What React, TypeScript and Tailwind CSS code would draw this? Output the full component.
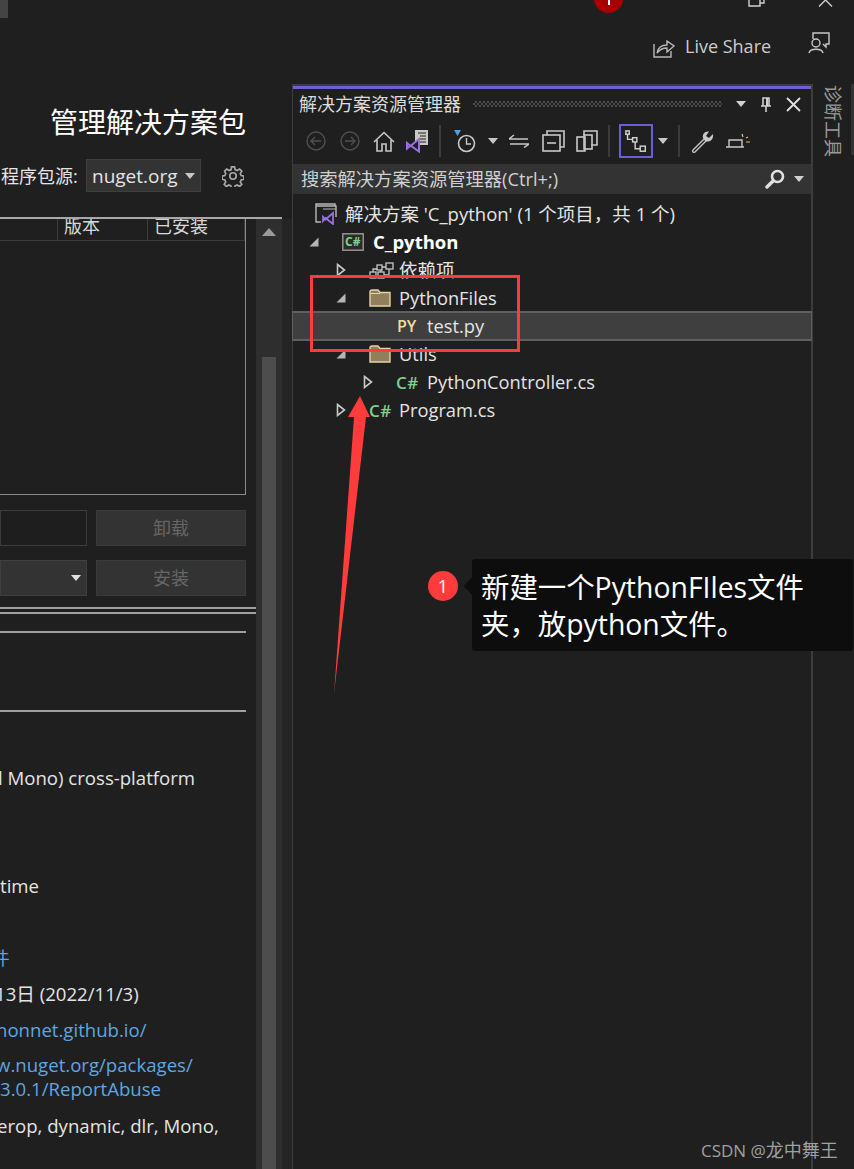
import React from "react";

const FONT = "font-['Open_Sans','Noto_Sans_CJK_SC',sans-serif]";

function Arrow({ open }: { open?: boolean }) {
  if (open) {
    return (
      <svg width="10" height="10" viewBox="0 0 10 10">
        <path d="M0.5 9.5 L9.5 9.5 L9.5 0.5 Z" fill="#b4b4b4" />
      </svg>
    );
  }
  return (
    <svg width="10" height="14" viewBox="0 0 10 14">
      <path d="M1.5 1.5 L8.5 7 L1.5 12.5 Z" fill="none" stroke="#c8c8c8" strokeWidth="1.6" />
    </svg>
  );
}

function Caret({ color = "#c8c8c8" }: { color?: string }) {
  return (
    <svg width="10" height="6" viewBox="0 0 10 6">
      <path d="M0 0 H10 L5 6 Z" fill={color} />
    </svg>
  );
}

function FolderIcon() {
  return (
    <svg width="22" height="18" viewBox="0 0 22 18">
      <path d="M1 3 Q1 1 3 1 H9 L11 3.5 H21 V17 H1 Z" fill="#8f7f5d" stroke="#e6d3a3" strokeWidth="1.4" />
      <path d="M1 4.5 H11" stroke="#e6d3a3" strokeWidth="1" />
    </svg>
  );
}

function CSharp() {
  return <span className="text-[17px] leading-none font-semibold tracking-[0.5px] text-[#7fd08c]">C#</span>;
}

function CsProject() {
  return (
    <svg width="22" height="18" viewBox="0 0 22 18">
      <rect x="0.8" y="0.8" width="20.4" height="16.4" fill="#2b2b2b" stroke="#9a9a9a" strokeWidth="1.4" />
      <text x="3" y="13" fontSize="12" fontWeight="700" fill="#7fd08c" fontFamily="'Open Sans',sans-serif">C#</text>
    </svg>
  );
}

function DepsIcon() {
  return (
    <svg width="25" height="17" viewBox="0 0 25 17" fill="none" stroke="#c8c8c8" strokeWidth="1.3">
      <rect x="1" y="10" width="6" height="6" />
      <rect x="9" y="10" width="6" height="6" />
      <rect x="17" y="1" width="7" height="6" />
      <rect x="8" y="3" width="5" height="5" />
      <path d="M4 10 V7 H8 M13 5 H17 M12 10 V8 M20 7 V13 H15" />
    </svg>
  );
}

function SolutionIcon() {
  return (
    <svg width="23" height="22" viewBox="0 0 23 22" fill="none">
      <path d="M1 3 V1 H20 V3 M1 3 H21 V14 M1 3 V19 H6" stroke="#b8b8b8" strokeWidth="1.4" />
      <path d="M8 6 H21" stroke="#b8b8b8" strokeWidth="1" />
      <path d="M8 14 L10.5 16.5 L18 10 L18 21 L10.5 15 L8 18 Z" fill="none" stroke="#9b6fe0" strokeWidth="1.8" />
    </svg>
  );
}

const ROWS = [
  { pad: "pl-[22px]", slot: "w-0", icon: <SolutionIcon />, iconBox: "w-[30px]", label: "解决方案 'C_python' (1 个项目，共 1 个)", text: "text-[18.5px]" },
  { pad: "pl-[16px]", slot: "w-[33px]", arrow: "open", icon: <CsProject />, iconBox: "w-[31px]", label: "C_python", text: "text-[18.5px] font-bold text-white" },
  { pad: "pl-[43px]", slot: "w-[33px]", arrow: "closed", icon: <DepsIcon />, iconBox: "w-[30px]", label: "依赖项", text: "text-[18.5px]" },
  { pad: "pl-[43px]", slot: "w-[33px]", arrow: "open", icon: <FolderIcon />, iconBox: "w-[30px]", label: "PythonFiles", text: "text-[18.3px]" },
  { pad: "pl-[104px]", slot: "w-0", icon: <span className="text-[16px] leading-none font-semibold text-[#f0dca0]">PY</span>, iconBox: "w-[30px]", label: "test.py", text: "text-[18.3px]", selected: true },
  { pad: "pl-[43px]", slot: "w-[33px]", arrow: "open", icon: <FolderIcon />, iconBox: "w-[30px]", label: "Utils", text: "text-[18.3px]" },
  { pad: "pl-[70px]", slot: "w-[33px]", arrow: "closed", icon: <CSharp />, iconBox: "w-[31px]", label: "PythonController.cs", text: "text-[18.3px]" },
  { pad: "pl-[43px]", slot: "w-[33px]", arrow: "closed", icon: <CSharp />, iconBox: "w-[30px]", label: "Program.cs", text: "text-[18.3px]" },
];

function Sep() {
  return <div className="w-[2px] h-[32px] bg-[#3c3c3c]" />;
}

function Toolbar() {
  return (
    <div className="h-[34px] mt-[5px] ml-[13px] flex items-center">
      <svg width="20" height="20" viewBox="0 0 20 20" fill="none" stroke="#4f4f4f" strokeWidth="1.4">
        <circle cx="10" cy="10" r="9" />
        <path d="M15 10 H5 M9 6 L5 10 L9 14" />
      </svg>
      <svg className="ml-[14px]" width="20" height="20" viewBox="0 0 20 20" fill="none" stroke="#4f4f4f" strokeWidth="1.4">
        <circle cx="10" cy="10" r="9" />
        <path d="M5 10 H15 M11 6 L15 10 L11 14" />
      </svg>
      <svg className="ml-[13px]" width="22" height="21" viewBox="0 0 22 21" fill="none" stroke="#c8c8c8" strokeWidth="1.6">
        <path d="M1 11 L11 1.5 L21 11 M4 9 V20 H9 V13 H13 V20 H18 V9" />
      </svg>
      <svg className="ml-[11px]" width="23" height="24" viewBox="0 0 23 24" fill="none">
        <rect x="9" y="1" width="13" height="15" fill="#c8c8c8" />
        <path d="M12 4 H20 M14 7 H20 M14 10 H20 M14 13 H20" stroke="#1f1f1f" strokeWidth="1.2" />
        <path d="M1 14 L4.5 17 L13 10 V22.5 L4.5 16.5 L1 19.5 Z" fill="#1f1f1f" stroke="#9b6fe0" strokeWidth="2" />
      </svg>
      <div className="ml-[10px]"><Sep /></div>
      <svg className="ml-[13px]" width="22" height="24" viewBox="0 0 22 24" fill="none">
        <path d="M0 1 H7 L3.5 7 Z" fill="#4aa3e8" />
        <circle cx="12.5" cy="14.5" r="8" stroke="#c8c8c8" strokeWidth="1.6" />
        <path d="M12.5 9 V15 H17" stroke="#c8c8c8" strokeWidth="1.4" />
      </svg>
      <div className="ml-[12px]"><Caret /></div>
      <svg className="ml-[11px]" width="20" height="14" viewBox="0 0 20 14" fill="none" stroke="#c8c8c8" strokeWidth="1.5">
        <path d="M0 5 H19 M0 5 L5 1 M20 10 H1 M20 10 L15 13.5" />
      </svg>
      <svg className="ml-[13px]" width="23" height="22" viewBox="0 0 23 22" fill="none" stroke="#c8c8c8" strokeWidth="1.6">
        <path d="M5 5 V1 H22 V17 H18" />
        <rect x="1" y="5" width="17" height="16" />
        <path d="M5 13 H14" />
      </svg>
      <svg className="ml-[11px]" width="22" height="22" viewBox="0 0 22 22" fill="none" stroke="#c8c8c8" strokeWidth="1.6">
        <path d="M8 5 V1 H21 V15 H15" />
        <rect x="1" y="7" width="8" height="14" />
        <rect x="8" y="5" width="8" height="14" />
      </svg>
      <div className="ml-[10px]"><Sep /></div>
      <div className="ml-[9px] w-[34px] h-[34px] border-2 border-[#6a5fd8] flex items-center justify-center">
        <svg width="22" height="23" viewBox="0 0 26 27" fill="none" stroke="#d0d0d0" strokeWidth="1.7">
          <rect x="1" y="1" width="4" height="4" />
          <rect x="9" y="9" width="5" height="5" />
          <rect x="18" y="19" width="6" height="6" />
          <path d="M3 5 V11 H9 M12 14 V22 H18" />
        </svg>
      </div>
      <div className="ml-[5px]"><Caret /></div>
      <div className="ml-[10px]"><Sep /></div>
      <svg className="ml-[12px]" width="23" height="23" viewBox="0 0 23 23" fill="none">
        <path d="M2 21 L13 10" stroke="#c8c8c8" strokeWidth="4" strokeLinecap="round" />
        <path d="M2 21 L13 10" stroke="#1f1f1f" strokeWidth="1.5" strokeLinecap="round" />
        <path d="M21 4 L17 8 L14 6 L17 1.5 C13 1 10 4 11 8 L13 11 C17 13 22 10 21 4 Z" fill="#c8c8c8" />
      </svg>
      <svg className="ml-[11px]" width="25" height="16" viewBox="0 0 25 16" fill="none">
        <path d="M0 14 H18 M3 14 V7 H16 V14" stroke="#c8c8c8" strokeWidth="1.4" />
        <path d="M16 1 L17 4 M20 9 H24 M20 5 L22 4" stroke="#e8c468" strokeWidth="1.2" />
      </svg>
    </div>
  );
}

function SolutionExplorer() {
  return (
    <section className="w-[521px] shrink-0 border-l border-r-2 border-t-2 border-[#3c3c3c] h-full">
      <div className="h-[3px] bg-[#6a5fd8]" />
      <div className="h-[30px] flex items-center pl-[6px]">
        <span className="text-[18px] leading-[28px] text-[#dcdcdc]">解决方案资源管理器</span>
        <div className="ml-[12px] w-[249px] h-[6px] bg-[repeating-conic-gradient(#4a4a4a_0_25%,transparent_0_50%)] bg-[length:4px_4px]" />
        <div className="ml-[14px]"><Caret color="#d0d0d0" /></div>
        <svg className="ml-[15px]" width="10" height="15" viewBox="0 0 10 15" fill="none" stroke="#d0d0d0" strokeWidth="1.6">
          <path d="M2 1 H8 V9 H2 Z M0 9 H10 M5 9 V15" />
          <path d="M6 1 V9" strokeWidth="2" />
        </svg>
        <svg className="ml-[15px]" width="15" height="15" viewBox="0 0 15 15" stroke="#e0e0e0" strokeWidth="1.8">
          <path d="M1 1 L14 14 M14 1 L1 14" />
        </svg>
      </div>
      <Toolbar />
      <div className="mt-[6px] h-[30px] bg-[#333333] flex items-center pl-[8px] pr-[7px] text-[18.3px] text-[#d0d0d0]">
        <span>搜索解决方案资源管理器(Ctrl+;)</span>
        <svg className="ml-auto" width="20" height="20" viewBox="0 0 20 20" fill="none" stroke="#e0e0e0">
          <circle cx="12.5" cy="7.5" r="5.5" strokeWidth="2.6" />
          <path d="M8 12 L2 18" strokeWidth="3.4" strokeLinecap="round" />
        </svg>
        <div className="ml-[9px]"><Caret color="#d0d0d0" /></div>
      </div>
      <div className="mt-[6px]">
        {ROWS.map((r) => (
          <div
            key={r.label}
            className={`h-[28px] flex items-center text-[#e4e4e4] ${r.pad} ${r.selected ? "bg-[#3f3f3f] border-y border-[#5f5f5f] outline outline-[#5f5f5f]" : ""}`}
          >
            <div className={`${r.slot} shrink-0 flex items-center`}>
              {r.arrow && <Arrow open={r.arrow === "open"} />}
            </div>
            <div className={`${r.iconBox} shrink-0 flex items-center`}>{r.icon}</div>
            <span className={`whitespace-nowrap ${r.text}`}>{r.label}</span>
          </div>
        ))}
      </div>
    </section>
  );
}

function PackagePane() {
  return (
    <div className="w-[256px] shrink-0 text-[#e4e4e4] overflow-hidden">
      <h1 className="h-[75px] pt-[16px] pl-[50px] text-[28px] leading-[44px] font-normal text-white whitespace-nowrap">管理解决方案包</h1>
      <div className="h-[58px] flex items-start">
        <span className="w-[86px] pl-[1px] text-[18px] leading-[34px] whitespace-nowrap">程序包源:</span>
        <div className="w-[115px] h-[33px] bg-[#333333] border border-[#3f3f3f] flex items-center pl-[5px] pt-[1px] text-[19px]">
          nuget.org
          <div className="ml-auto mr-[5px]"><Caret /></div>
        </div>
        <svg className="ml-[21px] mt-[6px]" width="22" height="22" viewBox="0 0 24 24" fill="none" stroke="#a8a8a8" strokeWidth="1.8">
          <circle cx="12" cy="12" r="3.5" />
          <path d="M10.3 2h3.4l.6 3 2.3 1 2.6-1.7 2.4 2.4-1.7 2.6 1 2.3 3 .6v3.4l-3 .6-1 2.3 1.7 2.6-2.4 2.4-2.6-1.7-2.3 1-.6 3h-3.4l-.6-3-2.3-1-2.6 1.7-2.4-2.4 1.7-2.6-1-2.3-3-.6v-3.4l3-.6 1-2.3L2.8 6.7l2.4-2.4 2.6 1.7 2.3-1z" />
        </svg>
      </div>
      <div className="h-[2px] bg-[#a8a8a8]" />
      <div className="w-[246px] h-[276px] border-r border-b border-[#8a8a8a]">
        <div className="h-[22px] flex border-b border-[#3c3c3c] text-[18px] leading-[14px] overflow-hidden text-[#d8d8d8]">
          <div className="w-[58px] border-r border-[#3c3c3c]" />
          <div className="w-[90px] pl-[6px] border-r border-[#3c3c3c]">版本</div>
          <div className="w-[97px] pl-[6px] border-r border-[#3c3c3c] whitespace-nowrap">已安装</div>
        </div>
      </div>
      <div className="mt-[15px] h-[36px] flex justify-between w-[246px]">
        <div className="w-[87px] border border-[#3c3c3c] bg-[#1e1e1e]" />
        <div className="w-[150px] bg-[#333333] border border-[#3a3a3a] flex items-center justify-center text-[18px] text-[#666666]">卸载</div>
      </div>
      <div className="mt-[14px] h-[36px] flex justify-between w-[246px]">
        <div className="w-[87px] bg-[#333333] border border-[#3f3f3f] flex items-center justify-end pr-[5px]"><Caret color="#e0e0e0" /></div>
        <div className="w-[150px] bg-[#333333] border border-[#3a3a3a] flex items-center justify-center text-[18px] text-[#666666]">安装</div>
      </div>
      <div className="mt-[11px] h-[7px] border-y-2 border-[#a0a0a0]" />
      <div className="mt-[17px] w-[246px] h-[81px] border-y-2 border-[#a0a0a0]" />
      <div className="mt-[53px] h-[26px] -ml-[2px] text-[18.6px] leading-[26px] whitespace-nowrap">l Mono) cross-platform</div>
      <div className="mt-[82px] h-[26px] text-[18.6px] leading-[26px]">time</div>
      <div className="mt-[46px] h-[26px] -ml-[9px] text-[18.6px] leading-[26px] text-[#5ea6e0]">件</div>
      <div className="mt-[10px] h-[26px] -ml-[5px] text-[18.6px] leading-[26px]">13日 (2022/11/3)</div>
      <div className="mt-[10px] h-[26px] -ml-[4px] text-[18.6px] leading-[26px] text-[#5ea6e0] whitespace-nowrap">honnet.github.io/</div>
      <div className="mt-[10px] -ml-[4px] text-[18.6px] leading-[24px] text-[#5ea6e0] whitespace-nowrap">
        <div>w.nuget.org/packages/</div>
        <div className="ml-[4px]">3.0.1/ReportAbuse</div>
      </div>
      <div className="mt-[12px] h-[26px] -ml-[3px] text-[18.6px] leading-[26px] whitespace-nowrap">erop, dynamic, dlr, Mono,</div>
    </div>
  );
}

export default function App() {
  return (
    <div className={`relative w-[854px] h-[1169px] overflow-hidden bg-[#1f1f1f] ${FONT}`}>
      <header className="h-[84px]">
        <div className="h-[32px] flex items-start">
          <div className="w-[8px] h-[18px] bg-[#444444]" />
          <div className="ml-[586px] -mt-[16px] w-[29px] h-[29px] rounded-full bg-[#a80000] flex justify-center pt-[16px]">
            <div className="w-[2px] h-[5px] bg-white" />
          </div>
          <svg className="ml-[125px]" width="17" height="7" viewBox="0 0 17 7" fill="none" stroke="#d0d0d0" strokeWidth="1.4">
            <path d="M1 0 V6 H12 V0 M12 3 H16 V0" />
          </svg>
          <svg className="ml-[53px]" width="15" height="7" viewBox="0 0 15 7" fill="none" stroke="#d0d0d0" strokeWidth="1.4">
            <path d="M1 6.5 L7.5 0 L14 6.5" />
          </svg>
        </div>
        <div className="flex items-start">
          <svg className="ml-[653px] mt-[4px]" width="22" height="22" viewBox="0 0 22 22" fill="none" stroke="#b8b8b8" strokeWidth="1.4">
            <path d="M1 8 V21 H18 V15" />
            <path d="M4 17 C5 11 9 9 14 9 V5 L21 10 L14 16 V12 C10 12 7 13 4 17 Z" />
          </svg>
          <span className="ml-[10px] text-[18px] leading-[28px] text-[#cccccc]">Live Share</span>
          <svg className="ml-[37px]" width="22" height="22" viewBox="0 0 22 22" fill="none" stroke="#c8c8c8" strokeWidth="1.4">
            <path d="M5 7 V1 H21 V12 H18 V15 L15 12" />
            <circle cx="8" cy="11" r="4" />
            <path d="M1 21 C2 16 14 16 15 21" />
          </svg>
        </div>
      </header>
      <main className="flex h-[1085px]">
        <PackagePane />
        <div className="w-[26px] shrink-0 bg-[#2e2e2e] mt-[133px] pt-[9px] pl-[6px] border-t-2 border-[#a8a8a8] h-[952px]">
          <svg width="14" height="8" viewBox="0 0 14 8"><path d="M0 8 H14 L7 0 Z" fill="#9a9a9a" /></svg>
          <div className="w-[14px] h-[1000px] bg-[#4d4d4d] mt-[121px]" />
        </div>
        <div className="w-[10px] shrink-0 mt-[135px] bg-[#242424]" />
        <SolutionExplorer />
        <aside className="flex-1 flex items-start">
          <div className="mt-[1px] pr-[4px] w-[38px] text-[18px] text-[#9a9a9a] [writing-mode:vertical-rl] [text-orientation:sideways] leading-[28px] h-[74px]">诊断工具</div>
          <div className="w-[3px] h-[71px] bg-[#333333]" />
        </aside>
      </main>

      {/* annotation layer */}
      <div className="absolute left-[310px] top-[275px] w-[210px] h-[77px] border-[3px] border-[#ff3b3b]" />
      <svg className="absolute left-[330px] top-[390px]" width="46" height="306" viewBox="0 0 46 306">
        <path d="M30 6 L40 27 L36 27 L4 304 L24 27 L18 27 Z" fill="#ff3b3b" />
      </svg>
      <div className="absolute left-[428px] top-[571px] w-[30px] h-[30px] rounded-full bg-[#ff3b3b] flex items-center justify-center text-white text-[18px]">1</div>
      <div className="absolute left-[466px] top-[580px] w-[12px] h-[12px] rotate-45 bg-[#0d0d0d]" />
      <div className="absolute left-[472px] top-[559px] w-[381px] h-[92px] rounded-[3px] bg-[#0d0d0d] pl-[9px] pt-[10px] pr-[40px] text-[28.4px] leading-[37px] text-white">
        新建一个PythonFIles文件夹，放python文件。
      </div>
      <div className="absolute left-[701px] top-[1139px] text-[17px] leading-[22px] text-[#a0a0a0] whitespace-nowrap">CSDN @<span className="text-[18px]">龙中舞王</span></div>
    </div>
  );
}
